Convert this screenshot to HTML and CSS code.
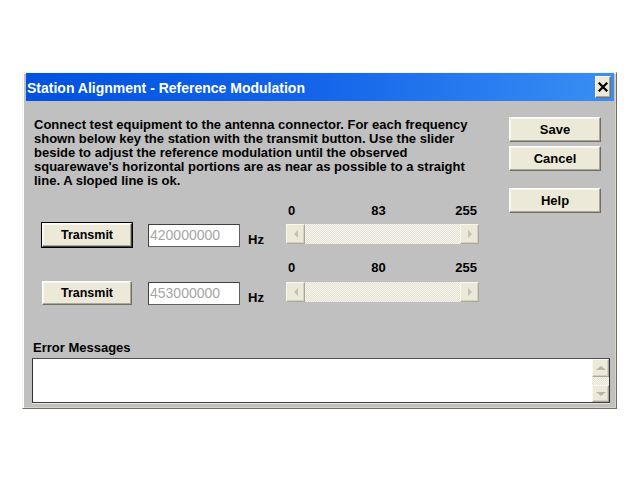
FILE: index.html
```html
<!DOCTYPE html>
<html>
<head>
<meta charset="utf-8">
<title>Station Alignment - Reference Modulation</title>
<link rel="stylesheet" href="styles.css">
</head>
<body>
<div class="window">
  <div class="titlebar">
    <span class="title">Station Alignment - Reference Modulation</span>
    <button class="close" aria-label="Close">
      <svg width="10" height="10" viewBox="0 0 10 10"><path d="M1.5 1.5L8.5 8.5M8.5 1.5L1.5 8.5" stroke="#000" stroke-width="2.2" stroke-linecap="square"/></svg>
    </button>
  </div>
  <div class="content">
    <div class="main">
      <p class="desc">Connect test equipment to the antenna connector. For each frequency<br>shown below key the station with the transmit button. Use the slider<br>beside to adjust the reference modulation until the observed<br>squarewave's horizontal portions are as near as possible to a straight<br>line. A sloped line is ok.</p>

      <div class="freq">
        <div class="scale"><span>0</span><span class="mid">83</span><span class="max">255</span></div>
        <button class="btn btn-default transmit">Transmit</button>
        <div class="field">420000000</div>
        <span class="unit">Hz</span>
        <div class="hscroll">
          <span class="sbtn"><i class="tri tri-left"></i></span>
          <span class="track"></span>
          <span class="sbtn"><i class="tri tri-right"></i></span>
        </div>
      </div>

      <div class="freq freq-second">
        <div class="scale"><span>0</span><span class="mid">80</span><span class="max">255</span></div>
        <button class="btn transmit">Transmit</button>
        <div class="field">453000000</div>
        <span class="unit">Hz</span>
        <div class="hscroll">
          <span class="sbtn"><i class="tri tri-left"></i></span>
          <span class="track"></span>
          <span class="sbtn"><i class="tri tri-right"></i></span>
        </div>
      </div>
    </div>

    <div class="actions">
      <button class="btn action">Save</button>
      <button class="btn action">Cancel</button>
      <button class="btn action help">Help</button>
    </div>
  </div>

  <div class="errors">
    <div class="err-label">Error Messages</div>
    <div class="errbox">
      <div class="vscroll">
        <span class="vbtn"><i class="tri tri-up"></i></span>
        <span class="vtrack"></span>
        <span class="vbtn"><i class="tri tri-down"></i></span>
      </div>
    </div>
  </div>
</div>
</body>
</html>
```

FILE: styles.css
```css
html, body {
  margin: 0;
  padding: 0;
  background: #ffffff;
}

body {
  font-family: "Liberation Sans", Arial, sans-serif;
  font-weight: bold;
  font-size: 13px;
  color: #000;
}

.window {
  box-sizing: border-box;
  width: 595px;
  height: 337px;
  margin: 72px 0 0 22px;
  background: #c0c0c0;
  border-top: 1px solid #f4f3ee;
  border-left: 1px solid #f4f3ee;
  border-right: 1px solid #716f64;
  border-bottom: 1px solid #716f64;
  box-shadow: inset 1px 1px 0 #ffffff, inset -1px -1px 0 #d8d5c8;
  padding: 0 2px 2px 3px;
}

.titlebar {
  height: 28px;
  display: flex;
  align-items: flex-start;
  background: linear-gradient(to right, #0052df 0%, #1565ea 50%, #3a8ff4 100%);
}

.title {
  flex: 1;
  color: #ffffff;
  font-size: 14px;
  line-height: 30px;
  padding-left: 1px;
  white-space: nowrap;
}

.close {
  box-sizing: border-box;
  width: 16px;
  height: 22px;
  margin: 3px 3px 0 0;
  padding: 0;
  display: flex;
  align-items: center;
  justify-content: center;
  background: #ece9d8;
  border: 1px solid;
  border-color: #ffffff #716f64 #716f64 #ffffff;
  box-shadow: inset -1px -1px 0 #aca899;
}

.content {
  display: grid;
  grid-template-columns: 1fr 92px;
  padding: 16px 13px 0 8px;
}

.desc {
  margin: 1px 0 0 0;
  line-height: 14px;
  white-space: nowrap;
}

.freq {
  display: grid;
  grid-template-columns: 106px 100px 38px 193px;
  grid-template-rows: 20px 24px;
  padding-left: 8px;
  margin-top: 15px;
}

.freq-second {
  margin-top: 13px;
  grid-template-rows: 21px 24px;
}

.scale {
  grid-column: 4;
  grid-row: 1;
  display: grid;
  grid-template-columns: 1fr auto 1fr;
  line-height: 15px;
  padding: 0 2px;
}

.scale .mid {
  margin-right: 8px;
}

.scale .max {
  text-align: right;
}

.btn {
  box-sizing: border-box;
  font-family: "Liberation Sans", Arial, sans-serif;
  font-weight: bold;
  font-size: 13px;
  color: #000;
  background: #ece9d8;
  border: 1px solid;
  border-color: #ffffff #716f64 #716f64 #ffffff;
  box-shadow: inset -1px -1px 0 #aca899, inset 1px 1px 0 #f7f6f0;
  padding: 0;
  margin: 0;
}

.transmit {
  grid-row: 2;
  grid-column: 1;
  width: 90px;
  height: 24px;
  font-size: 12.5px;
}

.btn-default {
  outline: 1px solid #000;
  outline-offset: 0;
  border-color: #ffffff #404040 #404040 #ffffff;
}

.field {
  grid-row: 2;
  grid-column: 2;
  box-sizing: border-box;
  width: 92px;
  height: 23px;
  margin-top: 1px;
  background: #ffffff;
  border: 1px solid;
  border-color: #404040 #606060 #606060 #404040;
  font-weight: normal;
  font-size: 14px;
  line-height: 21px;
  color: #a5a5a5;
  padding-left: 1px;
}

.unit {
  grid-row: 2;
  grid-column: 3;
  align-self: end;
  line-height: 15px;
}

.hscroll {
  grid-row: 2;
  grid-column: 4;
  display: flex;
  height: 20px;
  margin-top: 1px;
}

.sbtn, .vbtn {
  box-sizing: border-box;
  display: flex;
  align-items: center;
  justify-content: center;
  background: #ece9d8;
  border: 1px solid;
  border-color: #f7f6f0 #aca899 #aca899 #f7f6f0;
  box-shadow: inset -1px -1px 0 #d4d0c2;
}

.sbtn {
  width: 19px;
  height: 20px;
}

.track, .vtrack {
  flex: 1;
  background: repeating-conic-gradient(#f6f5f0 0 25%, #e4e1d3 0 50%) 0 0 / 2px 2px;
}

.tri {
  display: block;
  width: 0;
  height: 0;
  border-style: solid;
}

.tri-left {
  border-width: 4px 4px 4px 0;
  border-color: transparent #c4c1b4 transparent transparent;
}

.tri-right {
  border-width: 4px 0 4px 4px;
  border-color: transparent transparent transparent #c4c1b4;
}

.tri-up {
  border-width: 0 5px 4px 5px;
  border-color: transparent transparent #b8b5a8 transparent;
}

.tri-down {
  border-width: 4px 5px 0 5px;
  border-color: #b8b5a8 transparent transparent transparent;
}

.actions {
  display: flex;
  flex-direction: column;
  gap: 4px;
}

.action {
  width: 92px;
  height: 25px;
}

.help {
  margin-top: 13px;
}

.errors {
  padding: 0 4px 0 6px;
  margin-top: 35px;
}

.err-label {
  line-height: 15px;
  padding-left: 1px;
}

.errbox {
  box-sizing: border-box;
  height: 45px;
  margin-top: 3px;
  background: #ffffff;
  border: 1px solid;
  border-color: #505050 #303030 #404040 #303030;
  box-shadow: 0 1px 0 #e8e6dc;
  display: flex;
  justify-content: flex-end;
}

.vscroll {
  width: 17px;
  display: flex;
  flex-direction: column;
}

.vbtn {
  width: 17px;
}

.vbtn:first-child {
  height: 18px;
}

.vbtn:last-child {
  height: 17px;
}
```
